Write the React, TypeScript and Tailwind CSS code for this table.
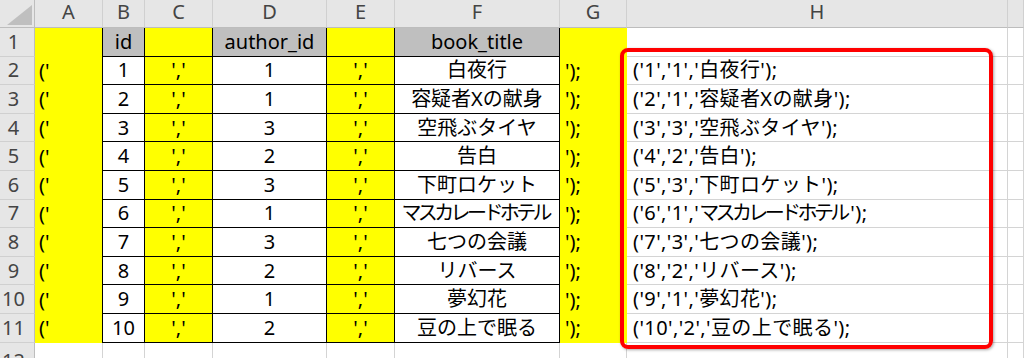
import React from "react";

type Book = { id: number; authorId: number; title: string };

const books: Book[] = [
  { id: 1, authorId: 1, title: "白夜行" },
  { id: 2, authorId: 1, title: "容疑者Xの献身" },
  { id: 3, authorId: 3, title: "空飛ぶタイヤ" },
  { id: 4, authorId: 2, title: "告白" },
  { id: 5, authorId: 3, title: "下町ロケット" },
  { id: 6, authorId: 1, title: "マスカレードホテル" },
  { id: 7, authorId: 3, title: "七つの会議" },
  { id: 8, authorId: 2, title: "リバース" },
  { id: 9, authorId: 1, title: "夢幻花" },
  { id: 10, authorId: 2, title: "豆の上で眠る" },
];

const cols = "grid grid-cols-[35px_68px_42px_68px_114px_68px_165px_67px_381px_16px]";
const font = { fontFamily: '"Noto Sans", "Noto Sans CJK JP", sans-serif' };

const rowHead =
  "flex items-center justify-center pr-[7px] bg-[#e6e6e6] border-r border-b border-r-[#bdbdbd] border-b-[#d0d0d0] text-[#444]";
const yellowA = "flex items-center pl-[4px] bg-[#ffff00] border-r border-black";
const yellowG = "flex items-center pl-[5px] bg-[#ffff00]";
const tableCell = "flex items-center justify-center border-r border-b border-black overflow-hidden";
const plain = "flex items-center pl-[6px] border-r border-b border-[#d4d4d4] overflow-hidden";

// long katakana titles are squeezed to fit the column, as in the sheet
function Title(props: { text: string }) {
  const squeeze = props.text.length >= 9 ? 3.6 : 0;
  return (
    <span style={squeeze ? { letterSpacing: -squeeze, paddingRight: squeeze } : undefined}>
      {props.text}
    </span>
  );
}

function ColumnHeaders() {
  const letters = ["A", "B", "C", "D", "E", "F", "G", "H", ""];
  return (
    <div className={`${cols} h-[28px]`}>
      <div className="relative bg-[#e6e6e6] border-r border-b border-r-[#bdbdbd] border-b-[#bdbdbd]">
        <svg className="absolute left-[7px] top-[5px]" width="25" height="20" viewBox="0 0 25 20">
          <polygon points="25,0 25,20 0,20" fill="#bfbfbf" />
        </svg>
      </div>
      {letters.map((l, i) => (
        <div
          key={i}
          className="flex items-center justify-center pb-[3px] bg-[#e6e6e6] border-r border-b border-r-[#d0d0d0] border-b-[#bdbdbd] text-[#444]"
        >
          {l}
        </div>
      ))}
    </div>
  );
}

function HeaderRow() {
  return (
    <div className={`${cols} h-[28.6px]`}>
      <div className={rowHead}>1</div>
      <div className={yellowA} />
      <div className={`${tableCell} bg-[#bfbfbf]`}>id</div>
      <div className={`${tableCell} bg-[#ffff00]`} />
      <div className={`${tableCell} bg-[#bfbfbf]`}>author_id</div>
      <div className={`${tableCell} bg-[#ffff00]`} />
      <div className={`${tableCell} bg-[#bfbfbf]`}>book_title</div>
      <div className={yellowG} />
      <div className={plain} />
      <div className={plain} />
    </div>
  );
}

function BookRow(props: { row: number; book: Book }) {
  const b = props.book;
  return (
    <div className={`${cols} h-[28.6px]`}>
      <div className={rowHead}>{props.row}</div>
      <div className={yellowA}>('</div>
      <div className={`${tableCell} bg-white`}>{b.id}</div>
      <div className={`${tableCell} bg-[#ffff00]`}>','</div>
      <div className={`${tableCell} bg-white`}>{b.authorId}</div>
      <div className={`${tableCell} bg-[#ffff00]`}>','</div>
      <div className={`${tableCell} bg-white`}>
        <Title text={b.title} />
      </div>
      <div className={yellowG}>');</div>
      <div className={`${plain} tracking-[0.4px]`}>
        ('{b.id}','{b.authorId}','<Title text={b.title} />');
      </div>
      <div className={plain} />
    </div>
  );
}

export default function App() {
  return (
    <div
      className="relative w-[1024px] h-[358px] overflow-hidden bg-white text-[20px] leading-none whitespace-nowrap text-black"
      style={font}
    >
      <ColumnHeaders />
      <HeaderRow />
      {books.map((b, i) => (
        <BookRow key={b.id} row={i + 2} book={b} />
      ))}
      <div className={`${cols} h-[28px]`}>
        <div className={`${rowHead} items-start pt-[8px]`}>12</div>
        {Array.from({ length: 9 }).map((_, i) => (
          <div key={i} className="border-r border-[#d4d4d4]" />
        ))}
      </div>
      <div className="absolute left-[620px] top-[48px] w-[373px] h-[301px] rounded-[8px] border-4 border-[#ff0000] shadow-[1px_1px_3px_rgba(0,0,0,0.35)]" />
    </div>
  );
}
